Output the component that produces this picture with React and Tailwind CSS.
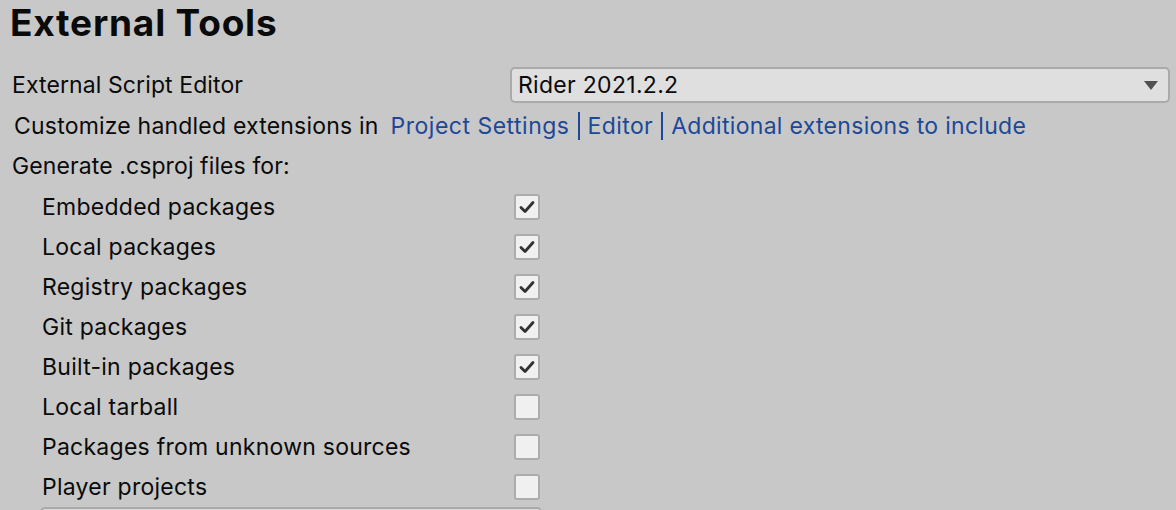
const packageOptions = [
  { label: "Embedded packages", checked: true },
  { label: "Local packages", checked: true },
  { label: "Registry packages", checked: true },
  { label: "Git packages", checked: true },
  { label: "Built-in packages", checked: true },
  { label: "Local tarball", checked: false },
  { label: "Packages from unknown sources", checked: false },
  { label: "Player projects", checked: false },
];

function Checkbox({ checked }) {
  return (
    <div className="flex h-[26px] w-[26px] items-center justify-center rounded-[3px] border-2 border-[#acacac] bg-[#f0f0f0]">
      {checked && (
        <svg width="16" height="14" viewBox="0 0 16 14" fill="none">
          <path d="M2 7.5 L6 11.5 L14 2.5" stroke="#303030" strokeWidth="2.8" strokeLinecap="round" strokeLinejoin="round" />
        </svg>
      )}
    </div>
  );
}

function Separator() {
  return <span className="mx-[8px] inline-block h-[28px] w-[2px] bg-[#1d4898]" />;
}

export default function App() {
  return (
    <div className="h-[510px] w-[1176px] overflow-hidden bg-[#c8c8c8] text-[#0a0a0a] font-['Inter',sans-serif]">
      <h1 className="pl-[10px] pt-[5px] text-[37px] font-bold leading-[36px] tracking-[0.8px]">External Tools</h1>

      <div className="mt-[26px] flex h-[36px] items-center pl-[12px] pr-[6px]">
        <span className="w-[498px] text-[23px] leading-none tracking-[0.1px]">External Script Editor</span>
        <div className="flex h-[36px] flex-1 items-center justify-between rounded-[5px] border-2 border-[#aaaaaa] bg-[#dfdfdf] pl-[6px] pr-[10px]">
          <span className="text-[23px] leading-none tracking-[0.3px]">Rider 2021.2.2</span>
          <svg width="14" height="9" viewBox="0 0 14 9">
            <path d="M0 0 H14 L7 9 Z" fill="#505050" />
          </svg>
        </div>
      </div>

      <div className="mt-[3px] flex h-[40px] items-center pl-[14px] text-[23px] leading-none">
        <span className="mr-[12px] tracking-[0.2px]">Customize handled extensions in</span>
        <span className="tracking-[0.5px] text-[#1d4898]">Project Settings</span>
        <Separator />
        <span className="tracking-[0.4px] text-[#1d4898]">Editor</span>
        <Separator />
        <span className="tracking-[0.3px] text-[#1d4898]">Additional extensions to include</span>
      </div>

      <div className="flex h-[40px] items-center pl-[12px] text-[23px] leading-none tracking-[0.1px]">Generate .csproj files for:</div>

      <div className="mt-[1px] flex flex-col">
        {packageOptions.map((option) => (
          <div key={option.label} className="flex h-[40px] items-center pl-[42px]">
            <span className="w-[472px] text-[23px] leading-none tracking-[0.25px]">{option.label}</span>
            <Checkbox checked={option.checked} />
          </div>
        ))}
      </div>

      <div className="ml-[40px] h-[30px] w-[502px] rounded-[5px] border-2 border-[#aaaaaa] bg-[#dadada]" />
    </div>
  );
}
